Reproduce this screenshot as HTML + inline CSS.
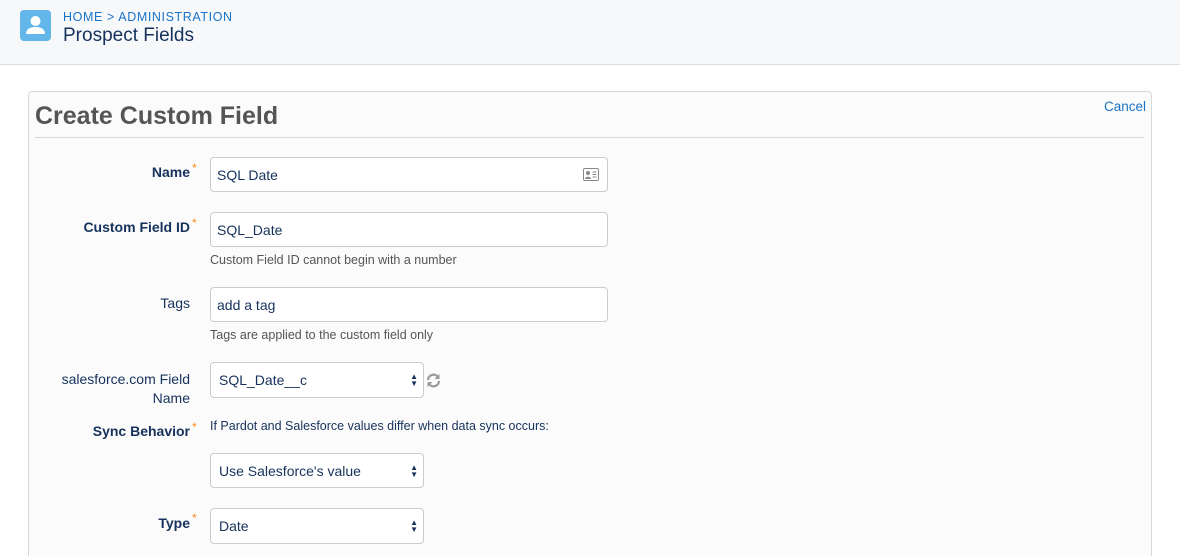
<!DOCTYPE html><html><head><style>
html,body{margin:0;width:1180px;height:556px;overflow:hidden}
body{background:#fff;font-family:"Liberation Sans",sans-serif;position:relative}
.hdr{position:absolute;left:0;top:0;width:1180px;height:64px;background:#f7f8fa;border-bottom:1px solid #d8dde6}
.ico{position:absolute;left:20px;top:10px;width:31px;height:31px;background:#62b6ea;border-radius:4px}
.bc{position:absolute;left:63px;top:10px;font-size:12.5px;color:#1a73c9;letter-spacing:.6px}
.pt{position:absolute;left:63px;top:25px;font-size:19px;color:#16325c}
.panel{position:absolute;left:28px;top:91px;width:1122px;height:464px;border:1px solid #d8d8d8;border-bottom:none;border-radius:4px 4px 0 0;background:#fbfbfb}
.title{position:absolute;left:35px;top:102px;font-size:25px;font-weight:bold;color:#555}
.line{position:absolute;left:35px;top:137px;width:1109px;height:1px;background:#d8d8d8}
.cancel{position:absolute;left:1104px;top:99px;font-size:13.5px;color:#1a73c9}
.lbl{position:absolute;right:990px;font-size:14px;color:#16325c;text-align:right}
.b{font-weight:bold}
.ast{position:absolute;color:#f88b1f;font-size:12px}
.in{position:absolute;left:210px;width:398px;height:34px;border:1px solid #ccc;border-radius:4px;background:#fff;box-sizing:border-box;font-size:14px;color:#16325c;padding:9px 6px}
.sel{width:214px;padding-left:8px}
.help{position:absolute;left:210px;font-size:12.5px;color:#555}
.arr{position:absolute;right:5px;top:10px;font-size:8px;line-height:7px;color:#16325c}
</style></head><body>
<div class="hdr"><div class="ico"><svg width="31" height="31"><circle cx="15.5" cy="11" r="5" fill="#fff"/><path d="M6 24c0-5 4-7 9.5-7s9.5 2 9.5 7z" fill="#fff"/></svg></div>
<div class="bc">HOME &gt; ADMINISTRATION</div><div class="pt">Prospect Fields</div></div>
<div class="panel"></div>
<div class="title">Create Custom Field</div><div class="line"></div><div class="cancel">Cancel</div>
<div class="lbl b" style="top:164px">Name</div><span class="ast" style="left:192px;top:161px">*</span>
<div class="in" style="top:157px;height:35px">SQL Date<svg style="position:absolute;right:8px;top:10px" width="16" height="13"><rect x="0.5" y="0.5" width="15" height="12" rx="1.5" fill="none" stroke="#888"/><circle cx="5" cy="5" r="2" fill="#888"/><path d="M2 11c0-3 6-3 6 0z" fill="#888"/><path d="M9.5 4h4M9.5 6.5h4M9.5 9h4" stroke="#888"/></svg></div>
<div class="lbl b" style="top:219px">Custom Field ID</div><span class="ast" style="left:192px;top:216px">*</span>
<div class="in" style="top:212px;height:35px">SQL_Date</div>
<div class="help" style="top:253px">Custom Field ID cannot begin with a number</div>
<div class="lbl" style="top:295px">Tags</div>
<div class="in" style="top:287px;height:35px">add a tag</div>
<div class="help" style="top:328px">Tags are applied to the custom field only</div>
<div class="lbl" style="top:370px;line-height:19px">salesforce.com Field<br>Name</div>
<div class="in sel" style="top:362px;height:36px">SQL_Date__c<div class="arr">▲<br>▼</div></div>
<svg style="position:absolute;left:425px;top:372px" width="17" height="17" viewBox="0 0 17 17"><path d="M3 8a5.5 5.5 0 0 1 10-3M14 9a5.5 5.5 0 0 1-10 3" stroke="#999" stroke-width="2.2" fill="none"/><path d="M14.5 2v5h-5zM2.5 15v-5h5z" fill="#999"/></svg>
<div class="lbl b" style="top:423px">Sync Behavior</div><span class="ast" style="left:192px;top:420px">*</span>
<div class="help" style="top:419px;color:#16325c;font-size:12.5px">If Pardot and Salesforce values differ when data sync occurs:</div>
<div class="in sel" style="top:453px;height:35px">Use Salesforce's value<div class="arr">▲<br>▼</div></div>
<div class="lbl b" style="top:515px">Type</div><span class="ast" style="left:192px;top:511px">*</span>
<div class="in sel" style="top:508px;height:36px">Date<div class="arr">▲<br>▼</div></div>
</body></html>
